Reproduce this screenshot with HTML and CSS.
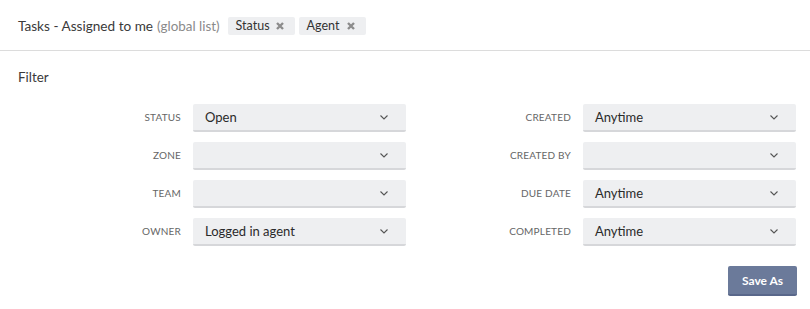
FILE: index.html
```html
<!DOCTYPE html>
<html>
<head>
<meta charset="utf-8">
<link rel="stylesheet" href="styles.css">
</head>
<body>
<div class="header">
  <span class="title">Tasks - Assigned to me</span>
  <span class="sub">(global list)</span>
  <div class="tags">
    <span class="tag">Status <svg class="x" viewBox="0 0 8 8"><path d="M1 1L7 7M7 1L1 7"/></svg></span>
    <span class="tag">Agent <svg class="x" viewBox="0 0 8 8"><path d="M1 1L7 7M7 1L1 7"/></svg></span>
  </div>
</div>
<div class="filter">
  <div class="filter-title">Filter</div>
  <div class="grid">
    <label class="lbl">Status</label>
    <div class="sel">Open<svg class="chev" viewBox="0 0 8 5"><path d="M0.5 0.5L4 4L7.5 0.5"/></svg></div>
    <label class="lbl">Created</label>
    <div class="sel">Anytime<svg class="chev" viewBox="0 0 8 5"><path d="M0.5 0.5L4 4L7.5 0.5"/></svg></div>

    <label class="lbl">Zone</label>
    <div class="sel"><svg class="chev" viewBox="0 0 8 5"><path d="M0.5 0.5L4 4L7.5 0.5"/></svg></div>
    <label class="lbl">Created by</label>
    <div class="sel"><svg class="chev" viewBox="0 0 8 5"><path d="M0.5 0.5L4 4L7.5 0.5"/></svg></div>

    <label class="lbl">Team</label>
    <div class="sel"><svg class="chev" viewBox="0 0 8 5"><path d="M0.5 0.5L4 4L7.5 0.5"/></svg></div>
    <label class="lbl">Due date</label>
    <div class="sel">Anytime<svg class="chev" viewBox="0 0 8 5"><path d="M0.5 0.5L4 4L7.5 0.5"/></svg></div>

    <label class="lbl">Owner</label>
    <div class="sel">Logged in agent<svg class="chev" viewBox="0 0 8 5"><path d="M0.5 0.5L4 4L7.5 0.5"/></svg></div>
    <label class="lbl">Completed</label>
    <div class="sel">Anytime<svg class="chev" viewBox="0 0 8 5"><path d="M0.5 0.5L4 4L7.5 0.5"/></svg></div>
  </div>
  <div class="actions">
    <button class="btn">Save As</button>
  </div>
</div>
</body>
</html>
```
FILE: styles.css
```css
html, body {
  margin: 0;
  padding: 0;
  background: #fff;
  font-family: Lato, "Open Sans", sans-serif;
  color: #333;
}
.header {
  height: 51px;
  border-bottom: 1px solid #dcdcdc;
  display: flex;
  align-items: center;
  padding-left: 18px;
  padding-top: 1px;
  box-sizing: border-box;
}
.title {
  font-size: 13.6px;
  color: #3a3a3a;
}
.sub {
  font-size: 13.4px;
  color: #8a8a8a;
  margin-left: 4px;
}
.tags {
  display: flex;
  gap: 4px;
  margin-left: 8px;
}
.tag {
  display: inline-flex;
  align-items: center;
  justify-content: space-between;
  height: 18px;
  width: 67px;
  box-sizing: border-box;
  padding: 0 11px 0 8px;
  background: #eeeff1;
  border-radius: 2px;
  font-size: 12.5px;
  color: #333;
}
.x {
  width: 8px;
  height: 8px;
  stroke: #8c8c8c;
  stroke-width: 2.4;
  fill: none;
}
.filter {
  padding-top: 18px;
}
.filter-title {
  font-size: 13.4px;
  color: #3a3a3a;
  padding-left: 18px;
  height: 17px;
  line-height: 17px;
}
.grid {
  margin-top: 18px;
  display: grid;
  grid-template-columns: 181px 213px 153px 213px;
  column-gap: 12px;
  row-gap: 10px;
}
.lbl {
  text-align: right;
  font-size: 10px;
  letter-spacing: 0.2px;
  text-transform: uppercase;
  color: #666;
  line-height: 26px;
}
.sel {
  height: 28px;
  box-sizing: border-box;
  background: #eeeff1;
  border-bottom: 2px solid #d6d7da;
  border-radius: 2px;
  padding: 0 18px 0 12px;
  font-size: 13px;
  color: #2a2a2a;
  display: flex;
  align-items: center;
  justify-content: space-between;
}
.chev {
  width: 8px;
  height: 5px;
  stroke: #555;
  stroke-width: 1.1;
  fill: none;
  margin-left: auto;
}
.actions {
  display: flex;
  justify-content: flex-start;
  padding-left: 728px;
  margin-top: 20px;
}
.btn {
  width: 69px;
  height: 30px;
  background: #6b7a9a;
  border: none;
  border-bottom: 2px solid #59678a;
  border-radius: 2px;
  color: #fff;
  font-family: Lato, "Open Sans", sans-serif;
  font-weight: bold;
  font-size: 12px;
  padding: 0;
}
```
